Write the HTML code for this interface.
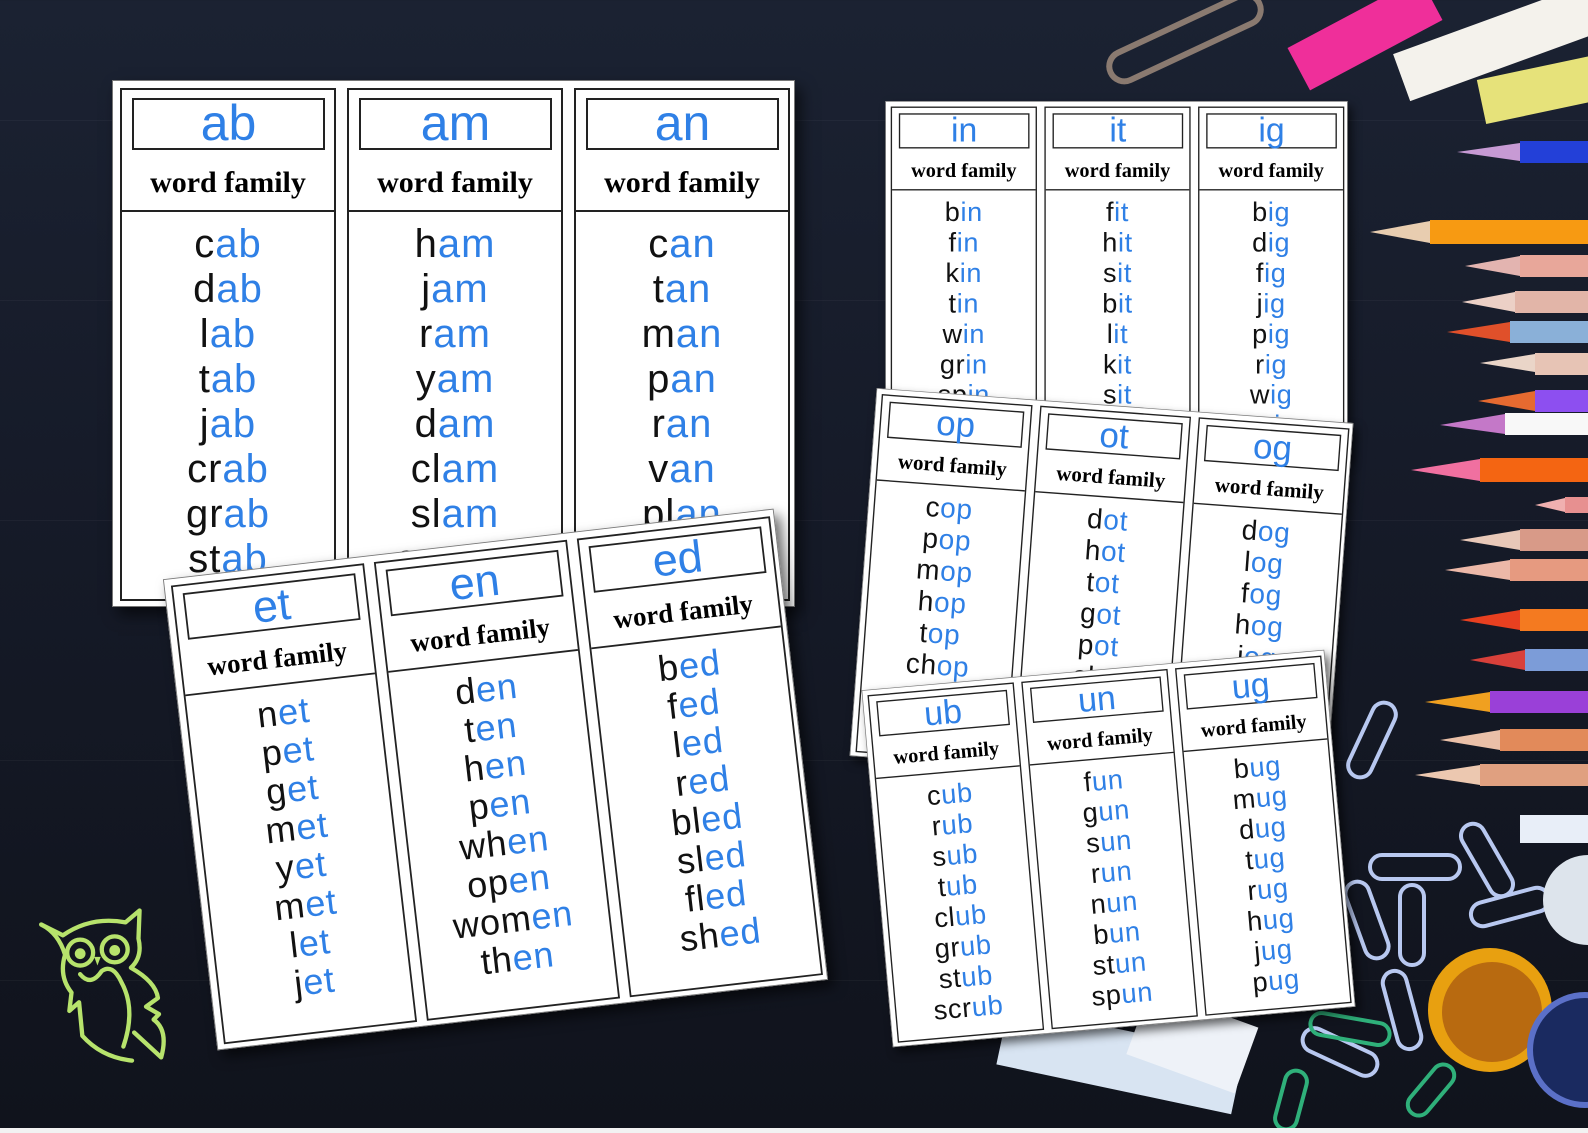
<!DOCTYPE html>
<html><head><meta charset="utf-8"><style>
*{margin:0;padding:0;box-sizing:border-box}
body{width:1588px;height:1133px;overflow:hidden;position:relative;background:linear-gradient(180deg,#1b2232 0%,#161b29 40%,#10131c 100%);font-family:"Liberation Sans",sans-serif}
.wood{position:absolute;left:0;width:1588px;height:1px;background:rgba(255,255,255,0.04)}
.card{position:absolute;width:683px;height:527px;background:#fff;border:1px solid #777;box-shadow:6px 8px 14px rgba(0,0,0,.6);overflow:hidden}
.col{position:absolute;top:7px;width:216px;height:513px;border:2px solid #222}
.hb{position:absolute;left:10px;top:8px;width:193px;height:52px;border:2px solid #222;color:#2f80e6;font-size:50px;text-align:center;line-height:46px}
.wf{position:absolute;left:0;right:0;top:76px;text-align:center;font-family:"Liberation Serif",serif;font-weight:bold;font-size:30px}
.ln{position:absolute;left:0;right:0;top:120px;border-top:2px solid #222}
.ws{position:absolute;left:0;right:0;top:132px;text-align:center;font-size:40px;line-height:45px;letter-spacing:1px;color:#111}
.ws b{font-weight:normal;color:#2f80e6}
</style></head><body>
<div class="wood" style="top:120px"></div><div class="wood" style="top:300px"></div><div class="wood" style="top:520px"></div><div class="wood" style="top:760px"></div><div class="wood" style="top:980px"></div>

<div style="position:absolute;left:1100px;top:20px;width:170px;height:36px;border:6px solid #8a7a70;border-radius:18px;transform:rotate(-25deg)"></div>
<div style="position:absolute;left:1290px;top:10px;width:150px;height:48px;background:#ef2f9a;transform:rotate(-28deg)"></div>
<div style="position:absolute;left:1395px;top:15px;width:220px;height:50px;background:#f4f2ec;transform:rotate(-20deg)"></div>
<div style="position:absolute;left:1480px;top:65px;width:140px;height:45px;background:#e6e27a;transform:rotate(-12deg)"></div>

<svg style="position:absolute;left:0;top:0" width="1588" height="1133">
 <g stroke="none">
 <polygon points="1457,152 1520,143 1520,161" fill="#c79ad4"/><rect x="1520" y="141" width="80" height="22" fill="#2340d8"/>
 <polygon points="1370,232 1430,221 1430,243" fill="#e8cdb0"/><rect x="1430" y="220" width="160" height="24" fill="#f79a12"/>
 <polygon points="1465,266 1520,256 1520,276" fill="#e3b4b0"/><rect x="1520" y="255" width="70" height="22" fill="#e8a79a"/>
 <polygon points="1462,302 1515,292 1515,312" fill="#ecd0c6"/><rect x="1515" y="291" width="80" height="22" fill="#e2b5a8"/>
 <polygon points="1447,332 1510,322 1510,342" fill="#e0502a"/><rect x="1510" y="321" width="80" height="22" fill="#8ab0d8"/>
 <polygon points="1480,363 1535,354 1535,372" fill="#ead5c8"/><rect x="1535" y="353" width="60" height="22" fill="#e7c4b5"/>
 <polygon points="1478,401 1535,391 1535,411" fill="#e66a30"/><rect x="1535" y="390" width="60" height="22" fill="#8d4ff0"/>
 <polygon points="1440,425 1505,414 1505,434" fill="#c478c8"/><rect x="1505" y="413" width="90" height="22" fill="#f8f8f8"/>
 <polygon points="1411,470 1480,459 1480,481" fill="#f070a0"/><rect x="1480" y="458" width="110" height="24" fill="#f46512"/>
 <polygon points="1535,505 1565,498 1565,512" fill="#f0b0b0"/><rect x="1565" y="497" width="30" height="16" fill="#e79090"/>
 <polygon points="1460,540 1520,530 1520,550" fill="#e8c8b8"/><rect x="1520" y="529" width="70" height="22" fill="#d89a88"/>
 <polygon points="1445,570 1510,560 1510,580" fill="#ecb8a8"/><rect x="1510" y="559" width="80" height="22" fill="#e69a80"/>
 <polygon points="1460,620 1520,610 1520,630" fill="#e84020"/><rect x="1520" y="609" width="70" height="22" fill="#f47a20"/>
 <polygon points="1470,660 1525,650 1525,670" fill="#d8403a"/><rect x="1525" y="649" width="70" height="22" fill="#7c9cd8"/>
 <polygon points="1425,702 1490,692 1490,712" fill="#f0a020"/><rect x="1490" y="691" width="100" height="22" fill="#9a40d8"/>
 <polygon points="1440,740 1500,730 1500,750" fill="#eac0a8"/><rect x="1500" y="729" width="90" height="22" fill="#e28a5a"/>
 <polygon points="1415,775 1480,765 1480,785" fill="#ecc8b0"/><rect x="1480" y="764" width="110" height="22" fill="#e0a080"/>
 </g>
 <g fill="none" stroke="#b8c8f0" stroke-width="4">
 <rect x="1360" y="700" width="24" height="80" rx="12" transform="rotate(25 1372 740)"/>
 <rect x="1370" y="855" width="90" height="24" rx="12"/>
 <rect x="1355" y="880" width="24" height="80" rx="12" transform="rotate(-20 1367 920)"/>
 <rect x="1400" y="885" width="24" height="80" rx="12"/>
 <rect x="1475" y="820" width="24" height="80" rx="12" transform="rotate(-30 1487 860)"/>
 <rect x="1470" y="895" width="80" height="24" rx="12" transform="rotate(-15 1510 907)"/>
 <rect x="1390" y="970" width="24" height="80" rx="12" transform="rotate(-15 1402 1010)"/>
 <rect x="1300" y="1040" width="80" height="24" rx="12" transform="rotate(25 1340 1052)"/>
 </g>
 <g fill="none" stroke="#2fb07a" stroke-width="4">
 <rect x="1310" y="1018" width="80" height="22" rx="11" transform="rotate(10 1350 1029)"/>
 <rect x="1280" y="1070" width="22" height="60" rx="11" transform="rotate(15 1291 1100)"/>
 <rect x="1420" y="1060" width="22" height="60" rx="11" transform="rotate(40 1431 1090)"/>
 </g>
 <rect x="1520" y="815" width="80" height="28" fill="#e8eef8"/>
 <circle cx="1490" cy="1010" r="62" fill="#e8a010"/><circle cx="1492" cy="1012" r="50" fill="#b86a10"/>
 <circle cx="1588" cy="900" r="45" fill="#dde4ec"/>
 <circle cx="1585" cy="1050" r="55" fill="#1a2a60" stroke="#5b70c8" stroke-width="6"/>
 <rect x="1000" y="1030" width="240" height="60" fill="#d8e4f2" transform="rotate(12 1120 1060)"/>
 <rect x="1135" y="1005" width="115" height="70" fill="#eef2f8" transform="rotate(20 1190 1040)"/>
 <g transform="translate(105,985) scale(1.08) translate(-103,-988)">
 <g fill="none" stroke="#b7e36c" stroke-width="4" stroke-linecap="round" stroke-linejoin="round">
  <path d="M44,932 L64,942 Q90,924 122,930 L135,919 L134,945 Q138,962 127,972 Q150,985 152,1000 L141,1008 L153,1015 L148,1020 Q162,1030 155,1055 L130,1032"/>
  <path d="M44,932 Q60,940 66,960 Q60,980 72,995 L70,1012 L79,1004 L82,1035 Q100,1055 128,1058"/>
  <path d="M80,978 Q90,990 100,975 Q110,968 118,985 Q132,1010 120,1045"/>
  <circle cx="80" cy="958" r="12"/><circle cx="112" cy="955" r="12"/>
 </g>
 <g fill="#b7e36c"><circle cx="80" cy="959" r="5"/><circle cx="112" cy="956" r="5"/><path d="M93,962 L99,962 L96,970Z"/></g>
 </g>
</svg>

<div class="card" style="left:112px;top:80px">
 <div class="col" style="left:7px"><div class="hb">ab</div><div class="wf">word family</div><div class="ln"></div><div class="ws">c<b>ab</b><br>d<b>ab</b><br>l<b>ab</b><br>t<b>ab</b><br>j<b>ab</b><br>cr<b>ab</b><br>gr<b>ab</b><br>st<b>ab</b></div></div>
 <div class="col" style="left:234px"><div class="hb">am</div><div class="wf">word family</div><div class="ln"></div><div class="ws">h<b>am</b><br>j<b>am</b><br>r<b>am</b><br>y<b>am</b><br>d<b>am</b><br>cl<b>am</b><br>sl<b>am</b><br>spr<b>am</b></div></div>
 <div class="col" style="left:461px"><div class="hb">an</div><div class="wf">word family</div><div class="ln"></div><div class="ws">c<b>an</b><br>t<b>an</b><br>m<b>an</b><br>p<b>an</b><br>r<b>an</b><br>v<b>an</b><br>pl<b>an</b><br>th<b>an</b></div></div>
</div>

<div class="card" style="left:774.5px;top:16px;transform:scale(0.677)">
 <div class="col" style="left:7px"><div class="hb">in</div><div class="wf">word family</div><div class="ln"></div><div class="ws">b<b>in</b><br>f<b>in</b><br>k<b>in</b><br>t<b>in</b><br>w<b>in</b><br>gr<b>in</b><br>sp<b>in</b></div></div>
 <div class="col" style="left:234px"><div class="hb">it</div><div class="wf">word family</div><div class="ln"></div><div class="ws">f<b>it</b><br>h<b>it</b><br>s<b>it</b><br>b<b>it</b><br>l<b>it</b><br>k<b>it</b><br>s<b>it</b></div></div>
 <div class="col" style="left:461px"><div class="hb">ig</div><div class="wf">word family</div><div class="ln"></div><div class="ws">b<b>ig</b><br>d<b>ig</b><br>f<b>ig</b><br>j<b>ig</b><br>p<b>ig</b><br>r<b>ig</b><br>w<b>ig</b><br>tw<b>ig</b></div></div>
</div>

<div class="card" style="left:760px;top:326px;transform:rotate(4.2deg) scale(0.7)">
 <div class="col" style="left:7px"><div class="hb">op</div><div class="wf">word family</div><div class="ln"></div><div class="ws">c<b>op</b><br>p<b>op</b><br>m<b>op</b><br>h<b>op</b><br>t<b>op</b><br>ch<b>op</b><br>st<b>op</b></div></div>
 <div class="col" style="left:234px"><div class="hb">ot</div><div class="wf">word family</div><div class="ln"></div><div class="ws">d<b>ot</b><br>h<b>ot</b><br>t<b>ot</b><br>g<b>ot</b><br>p<b>ot</b><br>sl<b>ot</b></div></div>
 <div class="col" style="left:461px"><div class="hb">og</div><div class="wf">word family</div><div class="ln"></div><div class="ws">d<b>og</b><br>l<b>og</b><br>f<b>og</b><br>h<b>og</b><br>j<b>og</b></div></div>
</div>

<div class="card" style="left:154px;top:516px;transform:rotate(-6.6deg) scale(0.9)">
 <div class="col" style="left:7px"><div class="hb">et</div><div class="wf">word family</div><div class="ln"></div><div class="ws" style="line-height:43px">n<b>et</b><br>p<b>et</b><br>g<b>et</b><br>m<b>et</b><br>y<b>et</b><br>m<b>et</b><br>l<b>et</b><br>j<b>et</b></div></div>
 <div class="col" style="left:234px"><div class="hb">en</div><div class="wf">word family</div><div class="ln"></div><div class="ws" style="line-height:43px">d<b>en</b><br>t<b>en</b><br>h<b>en</b><br>p<b>en</b><br>wh<b>en</b><br>op<b>en</b><br>wom<b>en</b><br>th<b>en</b></div></div>
 <div class="col" style="left:461px"><div class="hb">ed</div><div class="wf">word family</div><div class="ln"></div><div class="ws" style="line-height:43px">b<b>ed</b><br>f<b>ed</b><br>l<b>ed</b><br>r<b>ed</b><br>bl<b>ed</b><br>sl<b>ed</b><br>fl<b>ed</b><br>sh<b>ed</b></div></div>
</div>

<div class="card" style="left:767px;top:585px;transform:rotate(-5deg) scale(0.68)">
 <div class="col" style="left:7px"><div class="hb">ub</div><div class="wf">word family</div><div class="ln"></div><div class="ws">c<b>ub</b><br>r<b>ub</b><br>s<b>ub</b><br>t<b>ub</b><br>cl<b>ub</b><br>gr<b>ub</b><br>st<b>ub</b><br>scr<b>ub</b></div></div>
 <div class="col" style="left:234px"><div class="hb">un</div><div class="wf">word family</div><div class="ln"></div><div class="ws">f<b>un</b><br>g<b>un</b><br>s<b>un</b><br>r<b>un</b><br>n<b>un</b><br>b<b>un</b><br>st<b>un</b><br>sp<b>un</b></div></div>
 <div class="col" style="left:461px"><div class="hb">ug</div><div class="wf">word family</div><div class="ln"></div><div class="ws">b<b>ug</b><br>m<b>ug</b><br>d<b>ug</b><br>t<b>ug</b><br>r<b>ug</b><br>h<b>ug</b><br>j<b>ug</b><br>p<b>ug</b></div></div>
</div>

<div style="position:absolute;left:0;top:1128px;width:1588px;height:5px;background:#f2f2f2"></div>
</body></html>
